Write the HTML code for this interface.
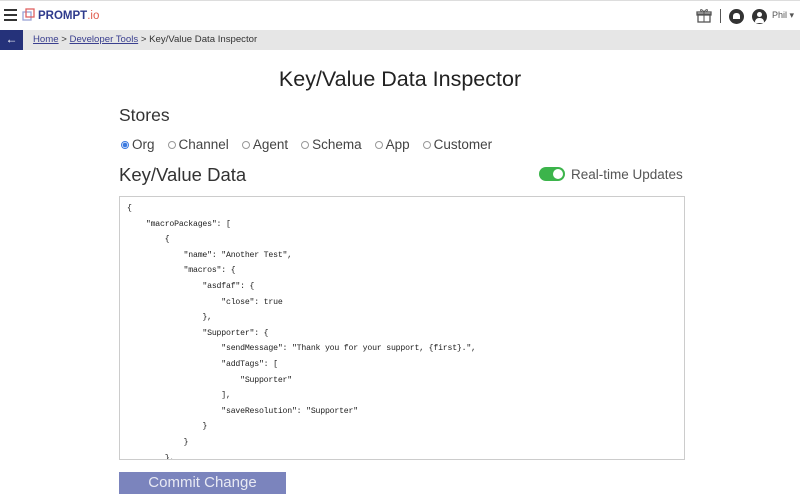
<!DOCTYPE html>
<html><head><style>
*{margin:0;padding:0;box-sizing:border-box}
body{width:800px;height:504px;overflow:hidden;background:#fff;font-family:"Liberation Sans",sans-serif;color:#333;position:relative}
.top{position:absolute;left:0;top:0;width:800px;height:30px;border-top:1px solid #ddd;background:#fff}
.bc{position:absolute;left:0;top:30px;width:800px;height:20px;background:#e6e6e6;font-size:9.6px;line-height:20px}
.back{position:absolute;left:0;top:0;width:23px;height:20px;background:#25327a;color:#fff;text-align:center;font-size:12px;line-height:19px}
.bc a{color:#3a3f8f;text-decoration:underline}
h1{position:absolute;top:67px;left:0;width:800px;text-align:center;font-size:21.5px;font-weight:normal;color:#222}
.h2{position:absolute;left:119px;color:#333}
.radios{position:absolute;left:121px;top:137px;font-size:13.5px;color:#444;white-space:nowrap}
.radios span{margin-right:13px}
.r{display:inline-block;width:8px;height:8px;border:1px solid #999;border-radius:50%;margin-right:3px;vertical-align:0px}
.r.on{border-color:#3b7ae0;background:radial-gradient(#3b7ae0 50%,#fff 60%)}
.ta{position:absolute;left:119px;top:196px;width:566px;height:264px;border:1px solid #ccc;overflow:hidden;font-family:"Liberation Mono",monospace;font-size:8.2px;letter-spacing:-0.2px;color:#222;white-space:pre;line-height:15.6px;padding:4px 7px}
.btn{position:absolute;left:119px;top:472px;width:167px;height:22px;background:#7b84bd;color:#e8e9f3;font-size:15px;text-align:center;line-height:22px}
</style></head><body>
<div class="top">
<div style="position:absolute;left:4px;top:8px;width:13px">
<div style="height:2px;background:#333;margin-bottom:3px"></div><div style="height:2px;background:#333;margin-bottom:3px"></div><div style="height:2px;background:#333"></div></div>
<svg style="position:absolute;left:22px;top:7px" width="14" height="14"><rect x="1" y="4" width="8" height="8" fill="none" stroke="#9aa3d6" stroke-width="1.3"/><rect x="4" y="1" width="8" height="8" fill="none" stroke="#e06060" stroke-width="1.3"/></svg>
<div style="position:absolute;left:38px;top:9px;font-size:11.5px;font-weight:bold;color:#2e3a8c">PROMPT<span style="color:#e05a4a;font-weight:normal">.io</span></div>
<svg style="position:absolute;left:696px;top:7px" width="16" height="16"><rect x="2" y="6" width="12" height="8" fill="none" stroke="#555" stroke-width="1.3"/><rect x="1" y="4" width="14" height="3" fill="none" stroke="#555" stroke-width="1.3"/><line x1="8" y1="4" x2="8" y2="14" stroke="#555"/><path d="M8 4 C5 0 3 2 6 4 M8 4 C11 0 13 2 10 4" fill="none" stroke="#555"/></svg>
<div style="position:absolute;left:720px;top:8px;width:1px;height:14px;background:#555"></div>
<div style="position:absolute;left:729px;top:8px;width:15px;height:15px;border-radius:50%;background:#333"><div style="position:absolute;left:4px;top:4px;width:7px;height:6px;background:#fff;border-radius:3px 3px 0 0"></div></div>
<div style="position:absolute;left:752px;top:8px;width:15px;height:15px;border-radius:50%;background:#333;overflow:hidden"><div style="position:absolute;left:5px;top:3px;width:5px;height:5px;background:#fff;border-radius:50%"></div><div style="position:absolute;left:3px;top:9px;width:9px;height:5px;background:#fff;border-radius:4px 4px 0 0"></div></div>
<div style="position:absolute;left:772px;top:9px;font-size:9px;color:#555">Phil &#9662;</div>
</div>
<div class="bc"><div class="back">&#8592;</div><span style="position:absolute;left:33px"><a>Home</a> &gt; <a>Developer Tools</a> &gt; Key/Value Data Inspector</span></div>
<h1>Key/Value Data Inspector</h1>
<div class="h2" style="top:105px;font-size:17.5px">Stores</div>
<div class="radios"><span><i class="r on"></i>Org</span><span><i class="r"></i>Channel</span><span><i class="r"></i>Agent</span><span><i class="r"></i>Schema</span><span><i class="r"></i>App</span><span><i class="r"></i>Customer</span></div>
<div class="h2" style="top:164px;font-size:18.5px">Key/Value Data</div>
<div style="position:absolute;left:539px;top:167px;width:26px;height:14px;border-radius:7px;background:#3cb44b"><div style="position:absolute;right:2px;top:2px;width:10px;height:10px;border-radius:50%;background:#fff"></div></div>
<div style="position:absolute;left:571px;top:167px;font-size:13.5px;color:#555">Real-time Updates</div>
<div class="ta">{
    "macroPackages": [
        {
            "name": "Another Test",
            "macros": {
                "asdfaf": {
                    "close": true
                },
                "Supporter": {
                    "sendMessage": "Thank you for your support, {first}.",
                    "addTags": [
                        "Supporter"
                    ],
                    "saveResolution": "Supporter"
                }
            }
        },</div>
<div class="btn">Commit Change</div>
</body></html>
